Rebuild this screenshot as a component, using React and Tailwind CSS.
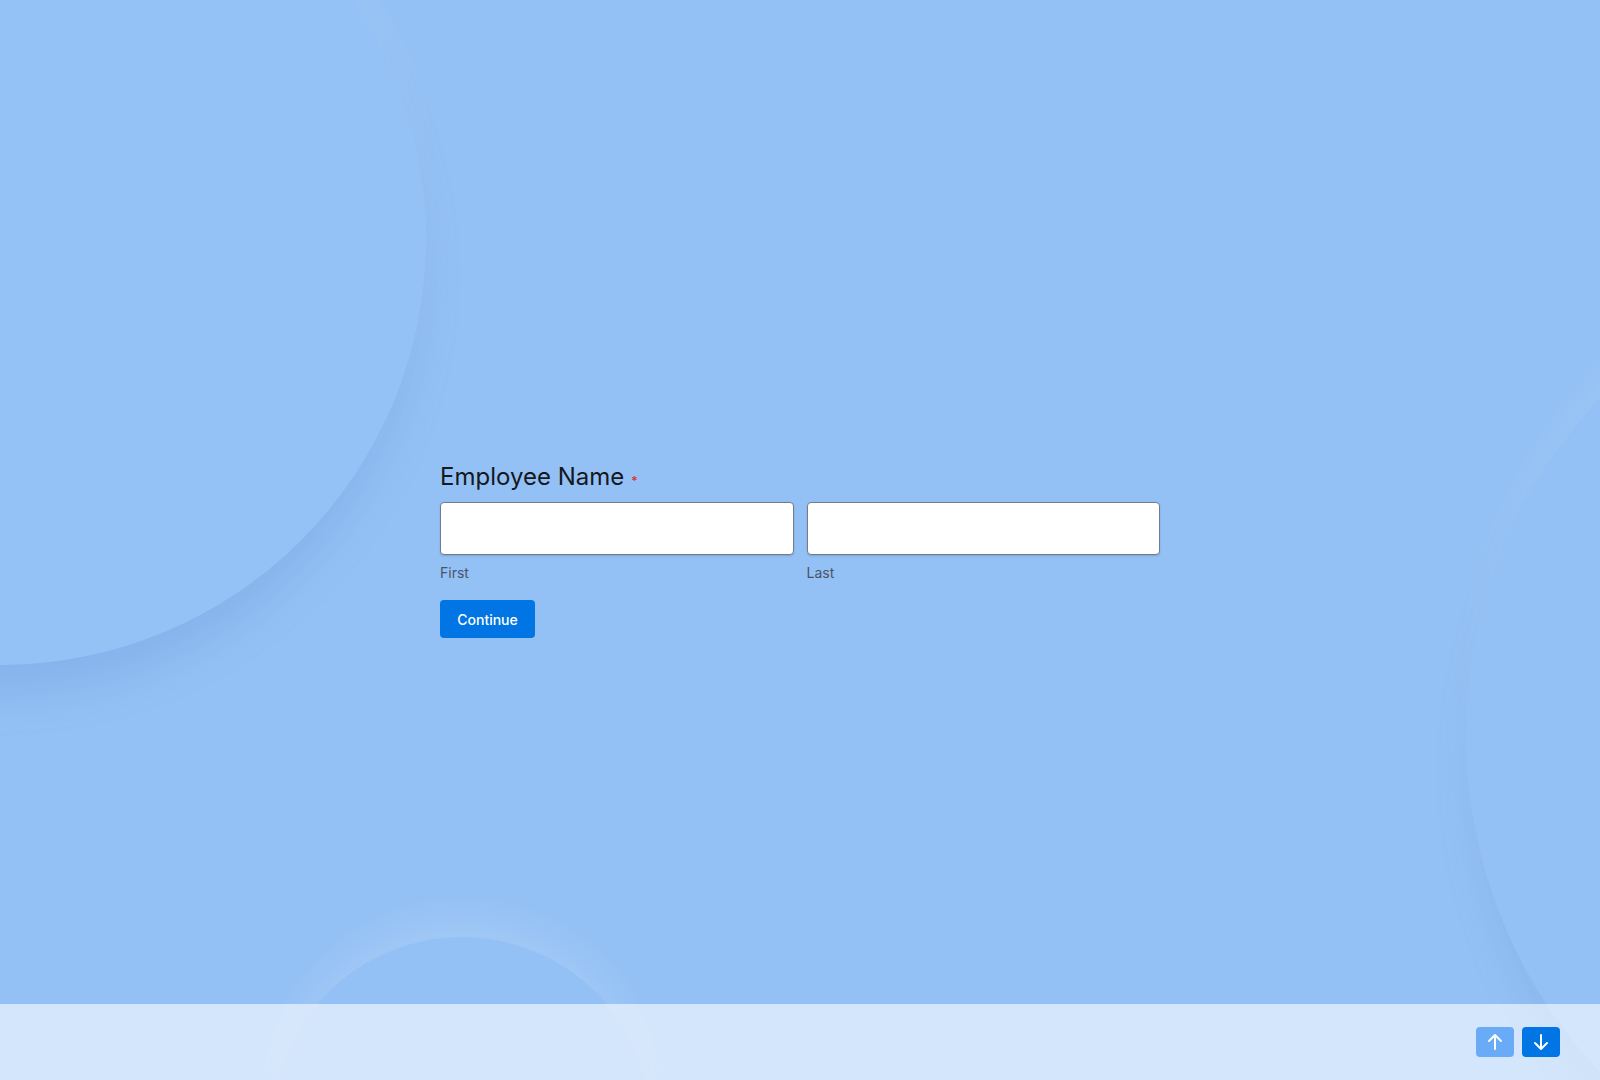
import React from "react";

function Arrow({ down }) {
  return (
    <svg width="16" height="18" viewBox="0 0 16 18" fill="none" stroke="white" strokeWidth="2" strokeLinecap="round" strokeLinejoin="round">
      {down ? (
        <path d="M8 2v14M2 10l6 6 6-6" />
      ) : (
        <path d="M8 16V2M2 8l6-6 6 6" />
      )}
    </svg>
  );
}

export default function App() {
  return (
    <div
      className="relative flex h-[1080px] w-full flex-col overflow-hidden bg-[#94c1f5]"
      style={{ fontFamily: "Inter, 'Noto Sans', sans-serif" }}
    >
      {/* background bubbles */}
      <div className="absolute left-[-426px] top-[-187px] h-[852px] w-[852px] rounded-full bg-[#95c2f6] shadow-[0_-24px_40px_-12px_rgba(255,255,255,0.12),0_36px_50px_-10px_rgba(30,80,160,0.13)]"></div>
      <div className="absolute left-[1466px] top-[244px] h-[982px] w-[982px] rounded-full bg-[#94c1f5] shadow-[0_-24px_40px_-14px_rgba(255,255,255,0.1),0_36px_50px_-14px_rgba(30,80,160,0.12)]"></div>
      <div className="absolute left-[272px] top-[937px] h-[380px] w-[380px] rounded-full bg-[#94c1f5] shadow-[0_-24px_36px_-8px_rgba(255,255,255,0.14),0_30px_40px_-10px_rgba(30,80,160,0.1)]"></div>

      {/* question */}
      <div className="relative flex-1">
        <div className="mx-auto w-[720px] pt-[459px]">
          <h2 className="text-[24px] leading-[35px] text-[#15181d]">
            Employee Name<span className="ml-[7px] text-[12px] font-semibold text-[#e0342b]">*</span>
          </h2>
          <div className="mt-1 flex gap-[13px]">
            <div className="flex-1">
              <input className="block h-[53px] w-full rounded-[4px] border border-[#737b8c] bg-white px-3 shadow-[0_1px_2px_rgba(0,0,0,0.15)] outline-none" />
              <div className="mt-2 text-[14px] leading-5 text-[#4a5468]">First</div>
            </div>
            <div className="flex-1">
              <input className="block h-[53px] w-full rounded-[4px] border border-[#737b8c] bg-white px-3 shadow-[0_1px_2px_rgba(0,0,0,0.15)] outline-none" />
              <div className="mt-2 text-[14px] leading-5 text-[#4a5468]">Last</div>
            </div>
          </div>
          <button className="mt-[17px] h-[38px] w-[95px] rounded-[4px] bg-[#0075e3] text-[14px] font-medium text-white">
            Continue
          </button>
        </div>
      </div>

      {/* footer */}
      <div className="relative flex h-[76px] items-center justify-end gap-2 bg-white/60 pr-10">
        <button className="flex h-[30px] w-[38px] items-center justify-center rounded-[4px] bg-[#6aabf7]">
          <Arrow />
        </button>
        <button className="flex h-[30px] w-[38px] items-center justify-center rounded-[4px] bg-[#0075e3]">
          <Arrow down />
        </button>
      </div>
    </div>
  );
}
